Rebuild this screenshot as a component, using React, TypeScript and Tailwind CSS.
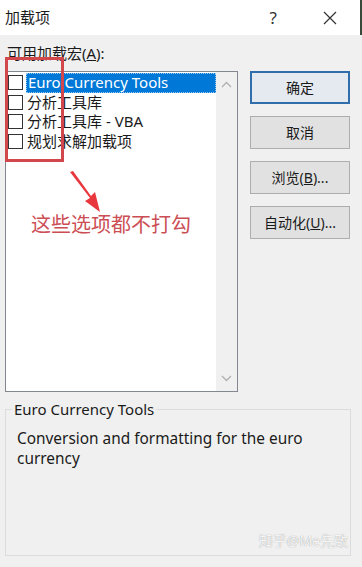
import React from "react";

const font = "font-['Noto_Sans','Noto_Sans_CJK_SC',sans-serif]";

const items = ["Euro Currency Tools", "分析工具库", "分析工具库 - VBA", "规划求解加载项"];

const buttons = [
  { label: "确定", key: "" },
  { label: "取消", key: "" },
  { label: "浏览(", key: "B", tail: ")..." },
  { label: "自动化(", key: "U", tail: ")..." },
];

const Chevron: React.FC<{ up?: boolean }> = ({ up }) => (
  <svg width="11" height="7" viewBox="0 0 11 7" fill="none">
    <path
      d={up ? "M1 6 L5.5 1.5 L10 6" : "M1 1 L5.5 5.5 L10 1"}
      stroke="#b0b0b0"
      strokeWidth="1.3"
    />
  </svg>
);

const App: React.FC = () => {
  return (
    <div className={`relative w-[362px] h-[567px] bg-[#f0f0f0] overflow-hidden text-[#1a1a1a] ${font}`}>
      {/* title bar */}
      <div className="h-[35px] bg-white flex items-center pl-[5px]">
        <span className="text-[15px]">加载项</span>
        <span className="ml-auto mr-[46px] text-[17px] text-[#333]">?</span>
        <svg width="14" height="14" viewBox="0 0 14 14" className="mr-[25px]">
          <path d="M1 1 L13 13 M13 1 L1 13" stroke="#333" strokeWidth="1.2" />
        </svg>
      </div>

      <div className="pl-[5px] pr-[11px]">
        <div className="h-[36px] flex items-center pl-[2px] text-[15px]">
          <span>
            可用加载宏(<span className="underline">A</span>):
          </span>
        </div>

        <div className="flex">
          {/* list */}
          <div className="w-[233px] h-[321px] border border-[#828790] bg-white flex">
            <div className="flex-1 pt-[1px] pl-[2px]">
              {items.map((it, i) => (
                <div key={it} className="h-[19.6px] flex items-center">
                  <span className="w-[15px] h-[15px] border border-[#333] bg-white mr-[3px] shrink-0" />
                  <span
                    className={`h-full flex items-center pl-[1px] text-[15px] leading-none ${
                      i === 0 ? "bg-[#0078d7] text-white flex-1 border border-dotted border-[#99c9ef]" : ""
                    }`}
                  >
                    {it}
                  </span>
                </div>
              ))}
            </div>
            <div className="w-[21px] bg-[#f0f0f0] flex flex-col items-center justify-between py-[9px]">
              <Chevron up />
              <Chevron />
            </div>
          </div>

          {/* buttons */}
          <div className="ml-[12px] flex flex-col gap-[12px]">
            {buttons.map((b, i) => (
              <div
                key={b.label}
                className={`w-[100px] h-[33px] flex items-center justify-center text-[14px] bg-[#e1e1e1] ${
                  i === 0 ? "border-2 border-[#2f6eaa] bg-[#e5eaf0]" : "border border-[#adadad]"
                }`}
              >
                {b.label}
                {b.key && <span className="underline">{b.key}</span>}
                {b.tail}
              </div>
            ))}
          </div>
        </div>

        {/* description group */}
        <div className="relative mt-[17px] h-[147px] border border-[#dcdcdc] w-[346px]">
          <span className="absolute -top-[12px] left-[6px] bg-[#f0f0f0] px-[2px] text-[15px] leading-[22px]">
            Euro Currency Tools
          </span>
          <p className="pt-[19px] pl-[11px] pr-[20px] text-[15.4px] leading-[20px]">
            Conversion and formatting for the euro currency
          </p>
          <span className="absolute right-[2px] bottom-[4px] text-[14px] text-white/90 [text-shadow:0_0_1px_#888]">
            知乎@Me先致
          </span>
        </div>
      </div>

      {/* annotation overlays */}
      <div className="absolute left-[5px] top-[57px] w-[59px] h-[105px] border-[3px] border-[#d2474c]" />
      <svg className="absolute left-[66px] top-[170px]" width="40" height="44" viewBox="0 0 40 44">
        <path d="M4 2 L24 28 L19 31 L34 42 L29 22 L25 26 L7 1 Z" fill="#e8383d" />
      </svg>
      <div className="absolute left-[31px] top-[211px] text-[20px] leading-[28px] text-[#cc4e55]">
        这些选项都不打勾
      </div>
      <div className="absolute right-0 top-0 w-[2px] h-[35px] bg-[#3a4a3a]" />
    </div>
  );
};

export default App;
